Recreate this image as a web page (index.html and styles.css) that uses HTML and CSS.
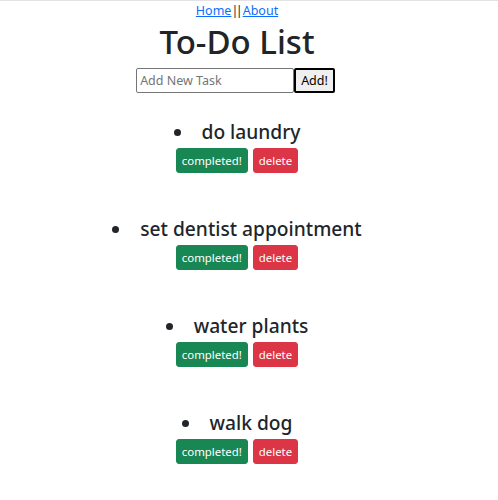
FILE: index.html
```html
<!DOCTYPE html>
<html lang="en">
<head>
<meta charset="utf-8">
<title>To-Do List</title>
<link rel="stylesheet" href="styles.css">
</head>
<body>
<nav class="nav"><a class="nav-link" href="#">Home</a><span class="nav-sep">||</span><a class="nav-link" href="#">About</a></nav>
<h1 class="title">To-Do List</h1>
<form class="add-form">
  <input class="task-input" type="text" placeholder="Add New Task"><button class="add-btn" type="button">Add!</button>
</form>
<ul class="tasks">
  <li class="task">
    <h3 class="task-name">do laundry</h3>
    <div class="task-actions"><button class="btn btn-done" type="button">completed!</button><button class="btn btn-delete" type="button">delete</button></div>
  </li>
  <li class="task">
    <h3 class="task-name">set dentist appointment</h3>
    <div class="task-actions"><button class="btn btn-done" type="button">completed!</button><button class="btn btn-delete" type="button">delete</button></div>
  </li>
  <li class="task">
    <h3 class="task-name">water plants</h3>
    <div class="task-actions"><button class="btn btn-done" type="button">completed!</button><button class="btn btn-delete" type="button">delete</button></div>
  </li>
  <li class="task">
    <h3 class="task-name">walk dog</h3>
    <div class="task-actions"><button class="btn btn-done" type="button">completed!</button><button class="btn btn-delete" type="button">delete</button></div>
  </li>
</ul>
</body>
</html>
```
FILE: styles.css
```css
html, body {
  background: #fff;
}
body {
  margin: 0;
  border-top: 1px solid #e3e3e3;
  padding-right: 24px;
  text-align: center;
  font-family: "Noto Sans", "Open Sans", sans-serif;
  color: #212529;
}
.nav {
  font-size: 12.5px;
  line-height: 19px;
}
.nav-link {
  color: #0d6efd;
  text-decoration: underline;
}
.nav-sep {
  letter-spacing: -2.5px;
  margin-right: 2.5px;
}
.title {
  margin: 2px 0 0;
  font-size: 33px;
  line-height: 40px;
  font-weight: 500;
}
.add-form {
  display: flex;
  justify-content: center;
  margin: 6px 0 0;
  padding-right: 3px;
}
.task-input {
  box-sizing: border-box;
  width: 158px;
  height: 25px;
  margin: 0;
  padding: 1px 3px;
  border: 1px solid #767676;
  border-radius: 2px;
  font-family: inherit;
  font-size: 12.5px;
  color: #212529;
}
.task-input::placeholder {
  color: #757575;
}
.add-btn {
  box-sizing: border-box;
  height: 25px;
  margin: 0;
  padding: 0 5px;
  border: 2px solid #000;
  border-radius: 2px;
  background: #efefef;
  font-family: inherit;
  font-size: 12.5px;
  color: #000;
}
.tasks {
  list-style: none;
  margin: 26.7px 0 0;
  padding: 0;
}
.task {
  margin-bottom: 44px;
}
.task-name {
  margin: 0;
  font-size: 19.2px;
  line-height: 24px;
  font-weight: 500;
}
.task-name::before {
  content: "";
  display: inline-block;
  width: 7px;
  height: 7px;
  border-radius: 50%;
  background: #212529;
  margin-right: 21px;
  vertical-align: 3px;
}
.task-actions {
  display: flex;
  justify-content: center;
  gap: 5px;
  margin-top: 4px;
}
.btn {
  box-sizing: border-box;
  height: 25px;
  margin: 0;
  padding: 0 5px;
  border: 1px solid transparent;
  border-radius: 3px;
  font-family: inherit;
  font-size: 11.4px;
  line-height: 17px;
  color: #fff;
}
.btn-done {
  background: #198754;
  border-color: #198754;
}
.btn-delete {
  background: #dc3545;
  border-color: #dc3545;
}
```
